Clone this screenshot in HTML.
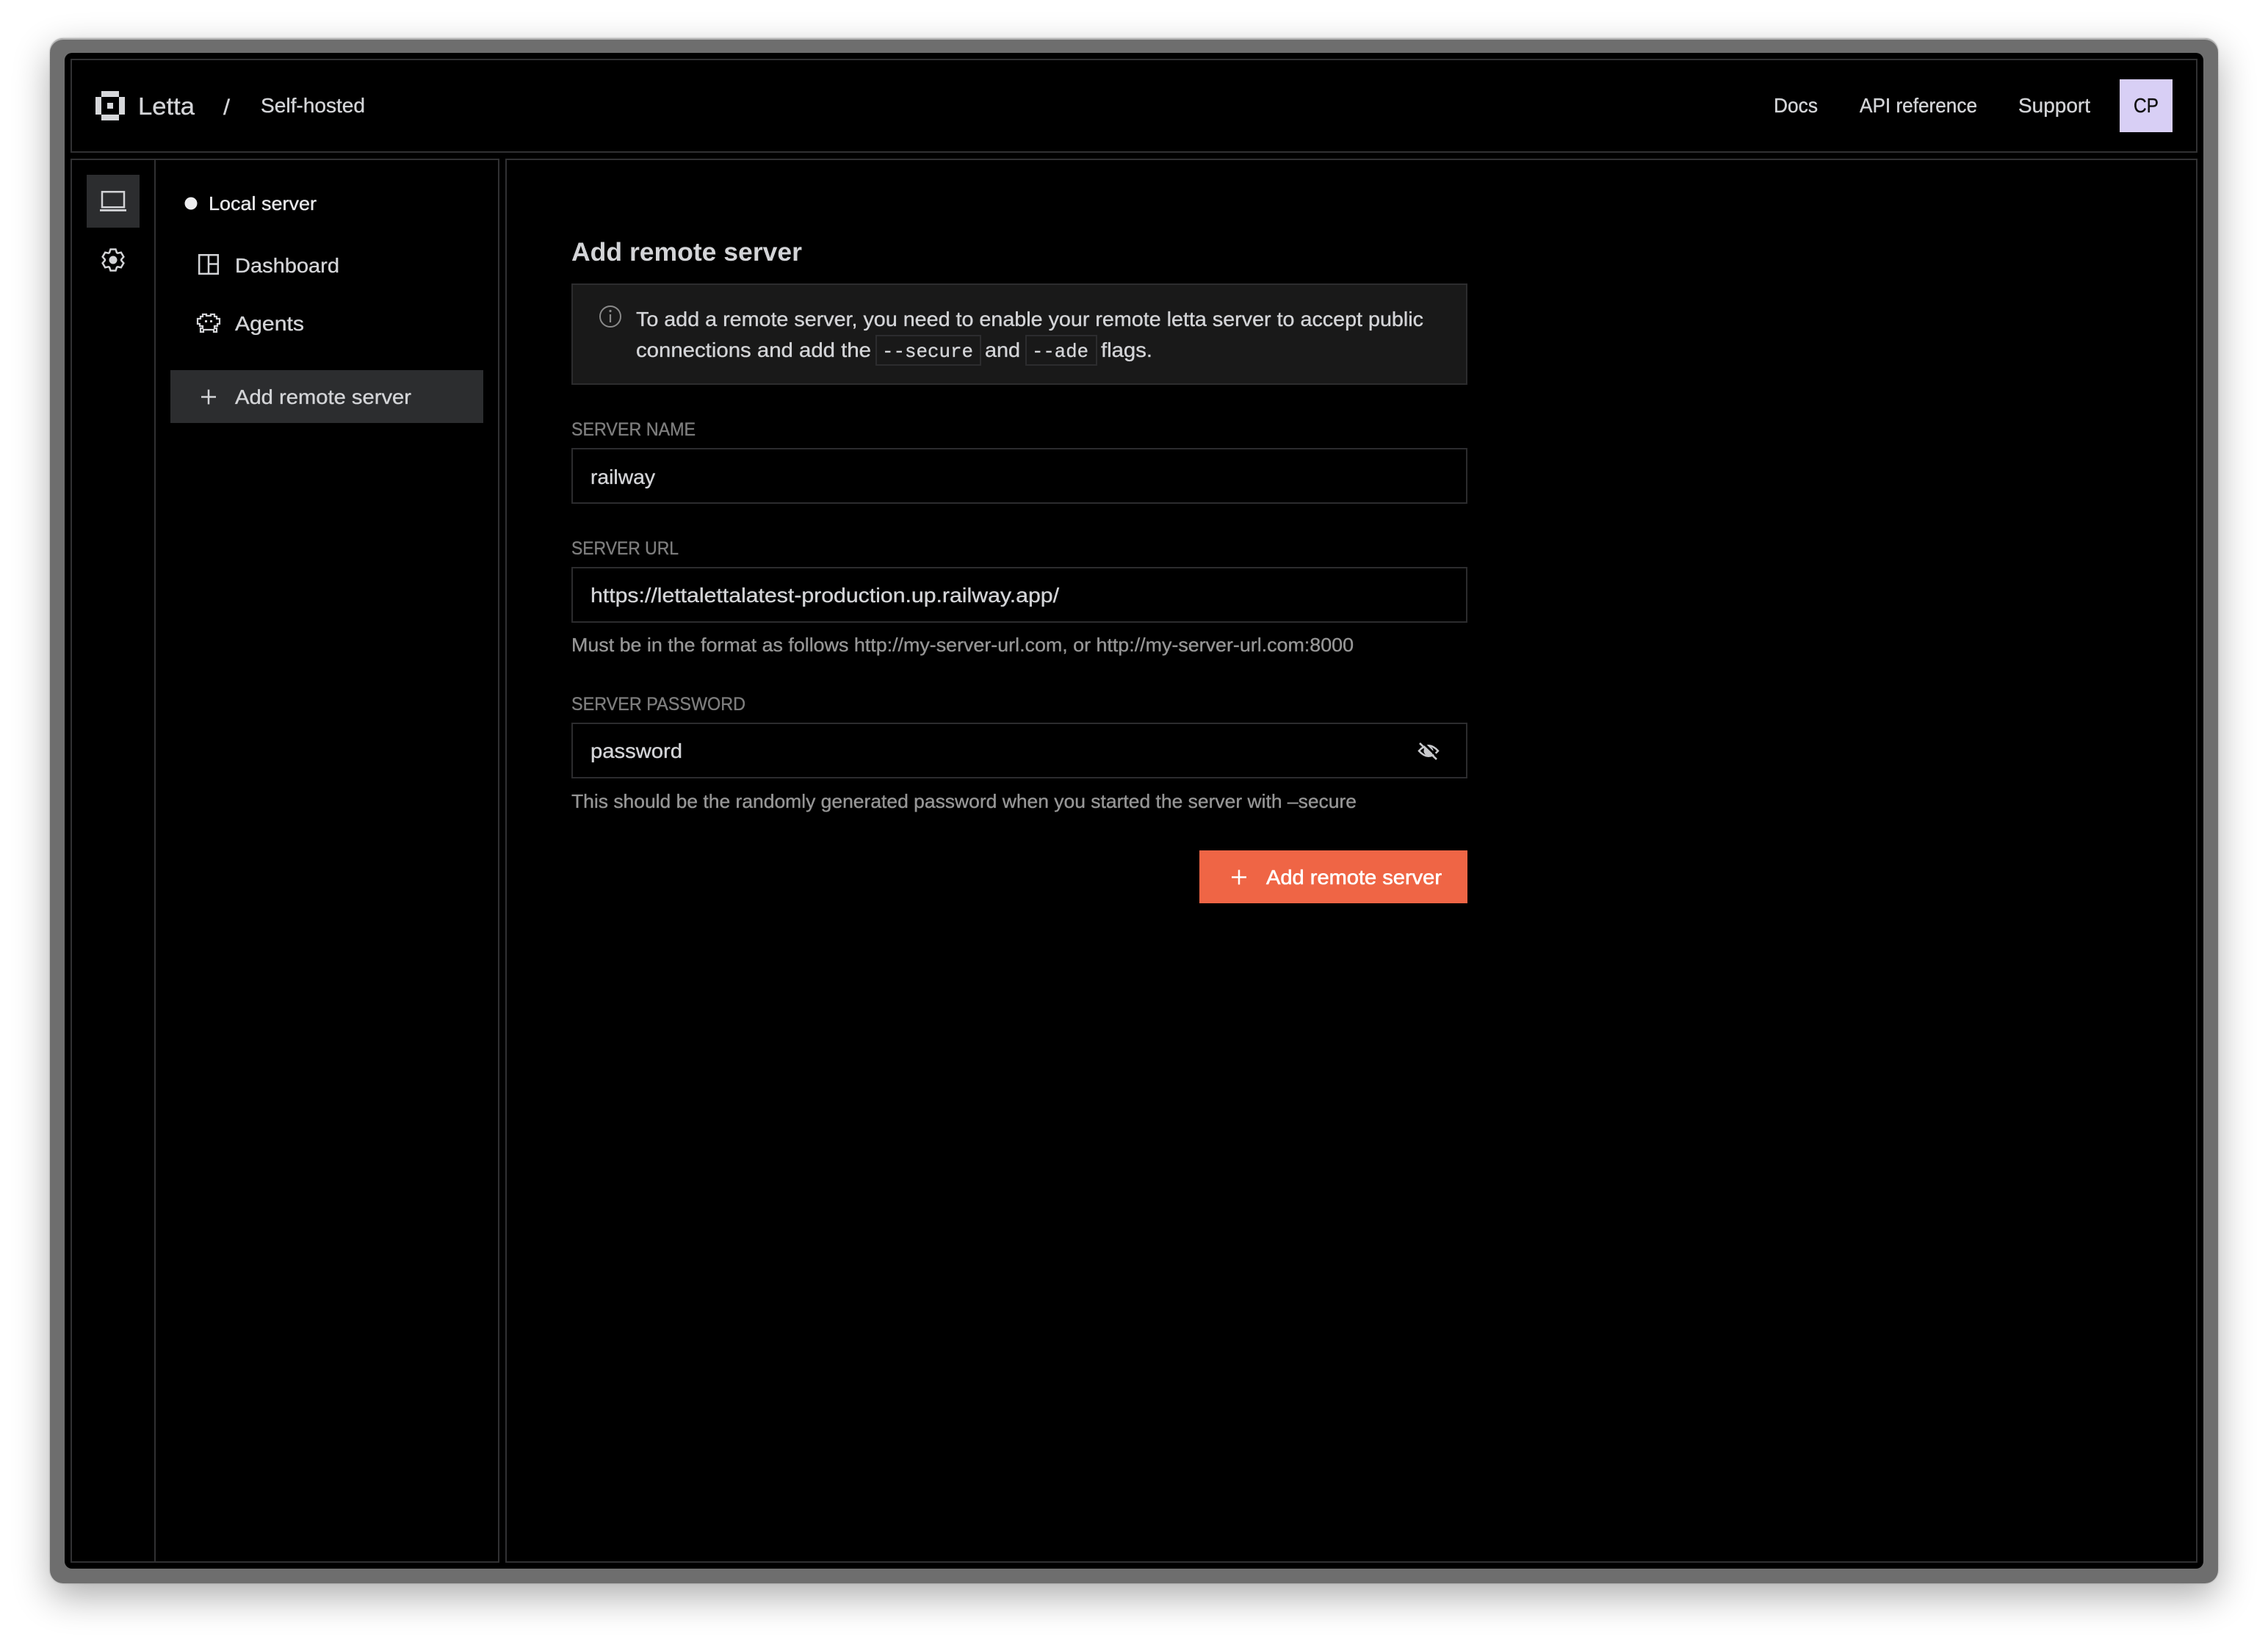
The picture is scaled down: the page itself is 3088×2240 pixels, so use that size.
<!DOCTYPE html>
<html lang="en">
<head>
<meta charset="utf-8">
<title>Letta - Add remote server</title>
<style>
html,body{margin:0;padding:0;background:#fff;width:3088px;height:2240px;overflow:hidden}
#frame{position:absolute;left:68px;top:52px;width:2952px;height:2104px;border-radius:18px;background:#6e6e6e;box-shadow:0 18px 50px rgba(0,0,0,.32),0 0 2px rgba(0,0,0,.3),inset 0 2px 0 #b4b4b4}
#inner{position:absolute;left:88px;top:72px;width:2912px;height:2064px;border-radius:10px;background:#000}
svg{position:absolute;left:0;top:0}
text{font-family:"Liberation Sans",sans-serif;fill:#d3d4d7;stroke:#d3d4d7;stroke-width:.35}
.m{font-size:28px}
.s{font-size:26px}
.l{font-size:25px;fill:#7e7e7e;stroke:#7e7e7e}
.h{font-size:26px;fill:#969696;stroke:#969696}
.c{font-family:"Liberation Mono",monospace;font-size:26px}
.box{fill:none;stroke:#2c2c2e;stroke-width:2}
.ln{fill:none;stroke:#313133;stroke-width:2}
.ic{fill:none;stroke:#d3d4d7;stroke-width:2.5}
</style>
</head>
<body>
<div id="frame"></div>
<div id="inner"></div>
<svg width="3088" height="2240" viewBox="0 0 3088 2240" xmlns="http://www.w3.org/2000/svg">
  <!-- structure lines -->
  <rect class="ln" x="97" y="81" width="2894" height="126"/>
  <rect class="ln" x="97" y="217" width="582" height="1910"/>
  <line class="ln" x1="211" y1="217" x2="211" y2="2127"/>
  <rect class="ln" x="689" y="217" width="2302" height="1910"/>

  <!-- logo -->
  <g fill="#d6d7da">
    <rect x="138" y="124" width="24" height="8"/>
    <rect x="138" y="156" width="24" height="8"/>
    <rect x="130" y="132" width="8" height="24"/>
    <rect x="162" y="132" width="8" height="24"/>
    <rect x="146" y="140" width="8" height="8"/>
  </g>
  <text x="188" y="156" font-size="33" textLength="77" lengthAdjust="spacingAndGlyphs">Letta</text>
  <text x="304" y="156" font-size="30" textLength="9" lengthAdjust="spacingAndGlyphs">/</text>
  <text class="m" x="355" y="153" textLength="142" lengthAdjust="spacingAndGlyphs">Self-hosted</text>

  <!-- top nav -->
  <text class="m" x="2415" y="153" textLength="60" lengthAdjust="spacingAndGlyphs">Docs</text>
  <text class="m" x="2532" y="153" textLength="160" lengthAdjust="spacingAndGlyphs">API reference</text>
  <text class="m" x="2748" y="153" textLength="98" lengthAdjust="spacingAndGlyphs">Support</text>
  <rect x="2886" y="108" width="72" height="72" fill="#d8cff5"/>
  <text class="m" x="2905" y="153" textLength="34" lengthAdjust="spacingAndGlyphs" style="fill:#111;stroke:#111">CP</text>

  <!-- rail -->
  <rect x="118" y="238" width="72" height="72" fill="#2c2d2f"/>
  <rect class="ic" x="139" y="261.2" width="30" height="21"/>
  <rect x="136" y="285" width="36" height="2.8" fill="#d3d4d7"/>
  <path class="ic" transform="translate(154 354)" d="M-5-10L-3.5-14.5H3.5L5-10L6.16-9.33L10.81-10.28L14.31-4.22L11.16-.67V.67L14.31 4.22L10.81 10.28L6.16 9.33L5 10L3.5 14.5H-3.5L-5 10L-6.16 9.33L-10.81 10.28L-14.31 4.22L-11.16 .67V-.67L-14.31-4.22L-10.81-10.28L-6.16-9.33Z"/>
  <circle cx="154" cy="354" r="5.5" fill="#d3d4d7"/>

  <!-- sidebar -->
  <circle cx="260" cy="277" r="8.5" fill="#eeeef0"/>
  <text class="s" x="284" y="286" textLength="147" lengthAdjust="spacingAndGlyphs" style="fill:#e8e8ea;stroke:#e8e8ea">Local server</text>

  <rect class="ic" x="271.2" y="347.2" width="25.6" height="25.6"/>
  <path class="ic" d="M284 347V373M284 359.5H297"/>
  <text class="m" x="320" y="371" font-size="29" textLength="142" lengthAdjust="spacingAndGlyphs">Dashboard</text>

  <path class="ic" style="stroke-width:2.2" d="M276 431V428H281V430H287V428H292V431H295V434H299V441H296V444H292V447H295V452H291V449H277V452H273V447H276V444H272V441H269V434H273V431Z"/>
  <rect x="279" y="436" width="3" height="3" fill="#d3d4d7"/>
  <rect x="286" y="436" width="3" height="3" fill="#d3d4d7"/>
  <text class="m" x="320" y="450" textLength="94" lengthAdjust="spacingAndGlyphs">Agents</text>

  <rect x="232" y="504" width="426" height="72" fill="#2c2d2f"/>
  <path class="ic" d="M274 540.5H294M284 530.5V550.5"/>
  <text class="m" x="320" y="550" textLength="240" lengthAdjust="spacingAndGlyphs">Add remote server</text>

  <!-- main title -->
  <text x="778" y="355" font-size="35" font-weight="700" textLength="314" lengthAdjust="spacingAndGlyphs" style="stroke-width:0">Add remote server</text>

  <!-- alert -->
  <rect x="779" y="387" width="1218" height="136" fill="#191919" stroke="#2c2c2e" stroke-width="2"/>
  <circle cx="831" cy="431" r="14" fill="none" stroke="#8a8a8a" stroke-width="2"/>
  <circle cx="831" cy="423.5" r="1.6" fill="#8a8a8a"/>
  <path d="M831 428V439" stroke="#8a8a8a" stroke-width="2.2" fill="none"/>
  <text class="m" x="866" y="444" textLength="1072" lengthAdjust="spacingAndGlyphs">To add a remote server, you need to enable your remote letta server to accept public</text>
  <text class="m" x="866" y="486" textLength="320" lengthAdjust="spacingAndGlyphs">connections and add the</text>
  <rect class="box" x="1193" y="457" width="142" height="40"/>
  <text class="c" x="1201" y="486" textLength="124" lengthAdjust="spacingAndGlyphs">--secure</text>
  <text class="m" x="1341" y="486" textLength="48" lengthAdjust="spacingAndGlyphs">and</text>
  <rect class="box" x="1397" y="457" width="96" height="40"/>
  <text class="c" x="1405" y="486" textLength="77" lengthAdjust="spacingAndGlyphs">--ade</text>
  <text class="m" x="1499" y="486" textLength="70" lengthAdjust="spacingAndGlyphs">flags.</text>

  <!-- server name -->
  <text class="l" x="778" y="593" textLength="169" lengthAdjust="spacingAndGlyphs">SERVER NAME</text>
  <rect class="box" x="779" y="611" width="1218" height="74"/>
  <text class="m" x="804" y="659" textLength="88" lengthAdjust="spacingAndGlyphs">railway</text>

  <!-- server url -->
  <text class="l" x="778" y="755" textLength="146" lengthAdjust="spacingAndGlyphs">SERVER URL</text>
  <rect class="box" x="779" y="773" width="1218" height="74"/>
  <text class="m" x="804" y="820" textLength="638" lengthAdjust="spacingAndGlyphs">https://lettalettalatest-production.up.railway.app/</text>
  <text class="h" x="778" y="887" textLength="1065" lengthAdjust="spacingAndGlyphs">Must be in the format as follows http://my-server-url.com, or http://my-server-url.com:8000</text>

  <!-- server password -->
  <text class="l" x="778" y="967" textLength="237" lengthAdjust="spacingAndGlyphs">SERVER PASSWORD</text>
  <rect class="box" x="779" y="985" width="1218" height="74"/>
  <text class="m" x="804" y="1032" textLength="125" lengthAdjust="spacingAndGlyphs">password</text>
  <path d="M1932 1022.5Q1945 1008 1958 1022.5Q1945 1037 1932 1022.5Z" fill="none" stroke="#c8c9cc" stroke-width="2.5"/>
  <circle cx="1945" cy="1022.5" r="6.5" fill="#c8c9cc"/>
  <path d="M1936 1010L1960 1033" stroke="#000" stroke-width="3" fill="none"/>
  <path d="M1933 1012L1956 1034" stroke="#c8c9cc" stroke-width="2.6" fill="none"/>
  <text class="h" x="778" y="1100" textLength="1069" lengthAdjust="spacingAndGlyphs">This should be the randomly generated password when you started the server with –secure</text>

  <!-- button -->
  <rect x="1633" y="1158" width="365" height="72" fill="#ef6545"/>
  <path d="M1677 1194.5H1697M1687 1184.5V1204.5" stroke="#fff" stroke-width="2.5" fill="none"/>
  <text class="m" x="1724" y="1204" textLength="239" lengthAdjust="spacingAndGlyphs" style="fill:#fff;stroke:#fff;stroke-width:.6">Add remote server</text>
</svg>
</body>
</html>
